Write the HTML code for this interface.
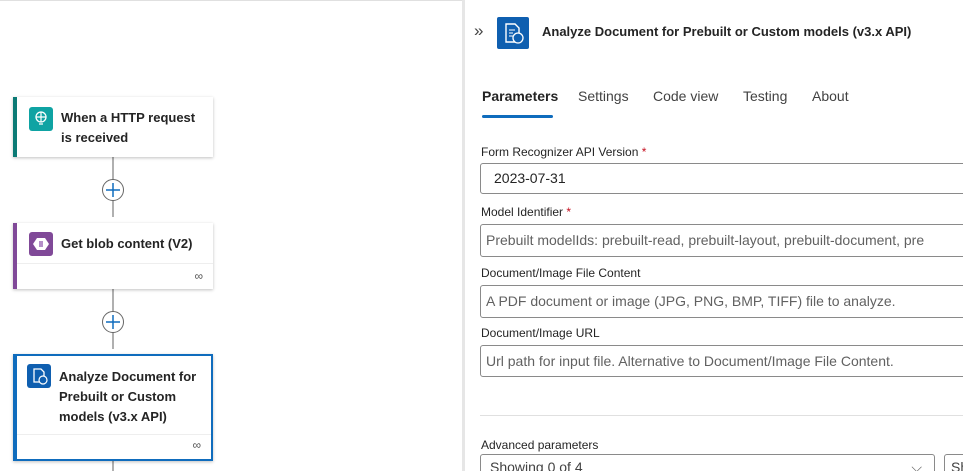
<!DOCTYPE html>
<html><head><style>
html,body{margin:0;width:963px;height:471px;overflow:hidden}
body{background:#fff;font-family:"Liberation Sans",sans-serif;position:relative}
.abs{position:absolute}
.card{position:absolute;left:13px;width:200px;background:#fff;box-shadow:0 1px 3px rgba(0,0,0,.25);box-sizing:border-box}
.ct{position:absolute;left:48px;font-size:13px;font-weight:bold;color:#242424;line-height:20px}
.ic{position:absolute;left:16px;width:24px;height:24px;border-radius:3px}
.line{position:absolute;left:112px;width:2px;background:#b0b0b0}
.plus{position:absolute;left:102px;width:20px;height:20px;border:1px solid #666;border-radius:50%;background:#fff}
.lbl{position:absolute;left:481px;font-size:12px;color:#242424}
.inp{position:absolute;left:480px;width:500px;border:1px solid #8a8a8a;border-radius:3px;box-sizing:border-box;font-size:14px;color:#616161;padding-left:5px}
</style></head><body>
<div class="abs" style="left:0;top:0;width:963px;height:1px;background:#e0e0e0"></div>
<div class="line" style="top:157px;height:60px"></div>
<div class="line" style="top:289px;height:60px"></div>
<div class="line" style="top:461px;height:10px"></div>
<svg class="plus" style="top:179px" viewBox="0 0 20 20"><path d="M10 3v14M3 10h14" stroke="#0f6cbd" stroke-width="1.5"/></svg>
<svg class="plus" style="top:311px" viewBox="0 0 20 20"><path d="M10 3v14M3 10h14" stroke="#0f6cbd" stroke-width="1.5"/></svg>
<div class="card" style="top:97px;height:60px;border-left:4px solid #0b7a75">
 <div class="ic" style="top:10px;background:#0fa3a3;left:12px"><svg width="24" height="24"><circle cx="12" cy="10" r="5" fill="none" stroke="#fff" stroke-width="1.3"/><path d="M7 10h10M12 5v10M10 17h4" stroke="#fff" stroke-width="1.2"/></svg></div>
 <div class="ct" style="top:11px;left:44px">When a HTTP request<br>is received</div></div>
<div class="card" style="top:223px;height:66px;border-left:4px solid #804998">
 <div class="ic" style="top:9px;background:#804998;left:12px"><svg width="24" height="24"><path d="M8 6h8l4 6-4 6H8l-4-6z" fill="#fff"/><rect x="10" y="9" width="4" height="6" fill="#b58fc9"/></svg></div>
 <div class="ct" style="top:11px;left:44px">Get blob content (V2)</div>
 <div class="abs" style="left:0;right:0;top:40px;height:1px;background:#eee"></div>
 <div class="abs" style="right:10px;top:46px;font-size:12px;color:#555">∞</div></div>
<div class="card" style="top:354px;height:107px;border:2px solid #0f6cbd;border-left-width:4px">
 <div class="ic" style="top:8px;background:#0f5fb0;left:10px"><svg width="24" height="24"><path d="M7 5h7l3 3v10H7z" fill="none" stroke="#fff" stroke-width="1.3"/><circle cx="16" cy="16" r="4" fill="#0f5fb0" stroke="#fff" stroke-width="1.2"/></svg></div>
 <div class="ct" style="top:11px;left:42px">Analyze Document for<br>Prebuilt or Custom<br>models (v3.x API)</div>
 <div class="abs" style="left:0;right:0;top:78px;height:1px;background:#eee"></div>
 <div class="abs" style="right:10px;top:82px;font-size:12px;color:#555">∞</div></div>

<div class="abs" style="left:462px;top:0;width:3px;height:471px;background:#e6e6e6"></div>
<div class="abs" style="left:465px;top:0;width:498px;height:471px;background:#fff"></div>
<div class="abs" style="left:474px;top:21px;font-size:17px;color:#444">»</div>
<div class="abs" style="left:497px;top:17px;width:32px;height:32px;background:#0f5fb0;border-radius:2px"><svg width="32" height="32"><path d="M9 7h9l4 4v14H9z" fill="none" stroke="#fff" stroke-width="1.4"/><path d="M12 13h6M12 16h4M12 19h4" stroke="#fff"/><circle cx="21" cy="21" r="5" fill="#0f5fb0" stroke="#fff" stroke-width="1.3"/></svg></div>
<div class="abs" style="left:542px;top:24px;font-size:13px;font-weight:bold;color:#242424">Analyze Document for Prebuilt or Custom models (v3.x API)</div>
<div class="abs" style="left:482px;top:88px;font-size:14px;font-weight:bold;color:#242424">Parameters</div>
<div class="abs" style="left:482px;top:115px;width:71px;height:3px;border-radius:2px;background:#0f6cbd"></div>
<div class="abs" style="left:578px;top:88px;font-size:14px;color:#424242">Settings</div>
<div class="abs" style="left:653px;top:88px;font-size:14px;color:#424242">Code view</div>
<div class="abs" style="left:743px;top:88px;font-size:14px;color:#424242">Testing</div>
<div class="abs" style="left:812px;top:88px;font-size:14px;color:#424242">About</div>
<div class="lbl" style="top:145px">Form Recognizer API Version <span style="color:#c50f1f">*</span></div>
<div class="inp" style="top:163px;height:31px;line-height:29px;color:#242424;padding-left:13px">2023-07-31</div>
<div class="lbl" style="top:205px">Model Identifier <span style="color:#c50f1f">*</span></div>
<div class="inp" style="top:224px;height:33px;line-height:31px;white-space:nowrap">Prebuilt modelIds: prebuilt-read, prebuilt-layout, prebuilt-document, pre</div>
<div class="lbl" style="top:266px">Document/Image File Content</div>
<div class="inp" style="top:285px;height:33px;line-height:31px">A PDF document or image (JPG, PNG, BMP, TIFF) file to analyze.</div>
<div class="lbl" style="top:326px">Document/Image URL</div>
<div class="inp" style="top:345px;height:32px;line-height:30px">Url path for input file. Alternative to Document/Image File Content.</div>
<div class="abs" style="left:480px;top:415px;width:483px;height:1px;background:#e0e0e0"></div>
<div class="lbl" style="top:438px">Advanced parameters</div>
<div class="inp" style="top:454px;width:455px;height:30px;line-height:24px;padding-left:9px;color:#424242">Showing 0 of 4<span style="position:absolute;right:12px;top:0;color:#666">⌵</span></div>
<div class="inp" style="left:944px;top:454px;width:40px;height:30px;line-height:24px;color:#424242;padding-left:6px">Sh</div>
</body></html>
